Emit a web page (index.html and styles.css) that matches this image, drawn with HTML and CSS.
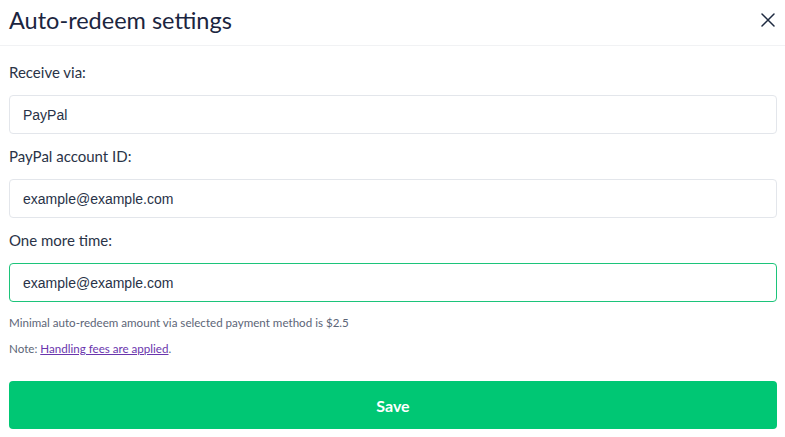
FILE: index.html
```html
<!DOCTYPE html>
<html lang="en">
<head>
<meta charset="utf-8">
<title>Auto-redeem settings</title>
<link rel="stylesheet" href="styles.css">
</head>
<body>
<div class="modal">
  <header class="modal-header">
    <h1 class="modal-title">Auto-redeem settings</h1>
    <button class="close-btn" type="button" aria-label="Close">
      <svg width="14" height="14" viewBox="0 0 14 14" aria-hidden="true">
        <path d="M1 1 L13 13 M13 1 L1 13" stroke="#1e2a40" stroke-width="1.5" fill="none" stroke-linecap="round"/>
      </svg>
    </button>
  </header>
  <form class="modal-body">
    <label class="field-label">Receive via:</label>
    <div class="input">PayPal</div>
    <label class="field-label">PayPal account ID:</label>
    <div class="input">example@example.com</div>
    <label class="field-label">One more time:</label>
    <div class="input input-focus">example@example.com</div>
    <p class="note note-first">Minimal auto-redeem amount via selected payment method is $2.5</p>
    <p class="note">Note: <a class="note-link" href="#">Handling fees are applied</a>.</p>
    <button class="save-btn" type="button">Save</button>
  </form>
</div>
</body>
</html>
```

FILE: styles.css
```css
* { box-sizing: border-box; }
html, body { margin: 0; padding: 0; background: #ffffff; }
body { font-family: Lato, "Noto Sans", sans-serif; color: #1f2a44; }

.modal { width: 785px; }

.modal-header {
  display: flex;
  justify-content: space-between;
  align-items: flex-start;
  height: 46px;
  padding: 6px 10px 0 9px;
  border-bottom: 1px solid #f1f2f4;
}
.modal-title {
  margin: 0;
  font-size: 23.5px;
  line-height: 29px;
  font-weight: 400;
  color: #1b2540;
}
.close-btn {
  margin: 7px 0 0 0;
  padding: 0;
  border: 0;
  background: none;
  width: 14px;
  height: 14px;
  display: flex;
  cursor: pointer;
}

.modal-body {
  display: flex;
  flex-direction: column;
  padding: 16px 8px 0 9px;
  margin: 0;
}
.field-label {
  font-size: 15px;
  line-height: 20px;
  color: #2a3347;
  margin-bottom: 13px;
}
.input {
  height: 39px;
  border: 1px solid #e3e6eb;
  border-radius: 4px;
  padding: 0 13px;
  display: flex;
  align-items: center;
  font-family: "Liberation Sans", Arial, sans-serif;
  font-size: 14px;
  color: #283247;
  margin-bottom: 12px;
}
.input-focus { border-color: #1cc47a; margin-bottom: 13px; }

.note {
  margin: 0;
  font-size: 11.6px;
  line-height: 16px;
  color: #5c6577;
}
.note-first { margin-bottom: 10px; }
.note-link { color: #6a35ad; text-decoration: underline; }

.save-btn {
  margin-top: 24px;
  height: 48px;
  border: 0;
  border-radius: 4px;
  background: #00c774;
  color: #ffffff;
  font-family: Lato, "Noto Sans", sans-serif;
  font-weight: 700;
  font-size: 16px;
  cursor: pointer;
}
```
